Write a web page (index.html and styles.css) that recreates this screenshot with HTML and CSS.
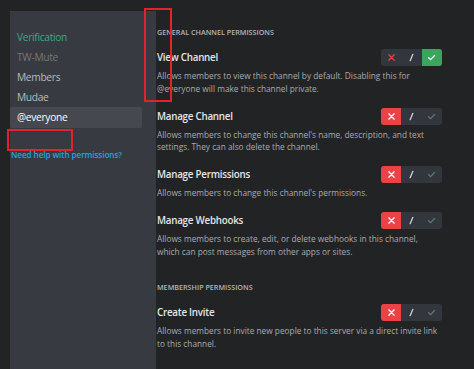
FILE: index.html
```html
<!DOCTYPE html>
<html>
<head>
  <title>Channel Permissions</title>
  <meta name="viewport" content="width=device-width, initial-scale=1.0">
  <link rel="stylesheet" href="styles.css">
</head>
<body>
  <div class="app">
    <aside class="sidebar">
      <ul class="roles">
        <li class="role role-green">Verification</li>
        <li class="role role-muted">TW-Mute</li>
        <li class="role">Members</li>
        <li class="role">Mudae</li>
        <li class="role role-active">@everyone</li>
      </ul>
      <a class="help-link" href="#">Need help with permissions?</a>
    </aside>

    <main class="content">
      <section class="perm-section">
        <h2 class="section-title">General Channel Permissions</h2>

        <div class="perm">
          <div class="perm-row">
            <span class="perm-name">View Channel</span>
            <div class="toggle">
              <span class="seg seg-deny"><svg viewBox="0 0 10 10"><path d="M2 2 8 8M8 2 2 8"/></svg></span>
              <span class="seg seg-neutral"><svg viewBox="0 0 10 10"><path d="M6.5 1.5 3.5 8.5"/></svg></span>
              <span class="seg seg-allow on"><svg viewBox="0 0 10 10"><path d="M1.8 5.2 4 7.4 8.4 2.8"/></svg></span>
            </div>
          </div>
          <p class="perm-desc">Allows members to view this channel by default. Disabling this for @everyone will make this channel private.</p>
        </div>

        <div class="perm">
          <div class="perm-row">
            <span class="perm-name">Manage Channel</span>
            <div class="toggle">
              <span class="seg seg-deny on"><svg viewBox="0 0 10 10"><path d="M2 2 8 8M8 2 2 8"/></svg></span>
              <span class="seg seg-neutral"><svg viewBox="0 0 10 10"><path d="M6.5 1.5 3.5 8.5"/></svg></span>
              <span class="seg seg-allow"><svg viewBox="0 0 10 10"><path d="M1.8 5.2 4 7.4 8.4 2.8"/></svg></span>
            </div>
          </div>
          <p class="perm-desc">Allows members to change this channel's name, description, and text settings. They can also delete the channel.</p>
        </div>

        <div class="perm">
          <div class="perm-row">
            <span class="perm-name">Manage Permissions</span>
            <div class="toggle">
              <span class="seg seg-deny on"><svg viewBox="0 0 10 10"><path d="M2 2 8 8M8 2 2 8"/></svg></span>
              <span class="seg seg-neutral"><svg viewBox="0 0 10 10"><path d="M6.5 1.5 3.5 8.5"/></svg></span>
              <span class="seg seg-allow"><svg viewBox="0 0 10 10"><path d="M1.8 5.2 4 7.4 8.4 2.8"/></svg></span>
            </div>
          </div>
          <p class="perm-desc">Allows members to change this channel's permissions.</p>
        </div>

        <div class="perm">
          <div class="perm-row">
            <span class="perm-name">Manage Webhooks</span>
            <div class="toggle">
              <span class="seg seg-deny on"><svg viewBox="0 0 10 10"><path d="M2 2 8 8M8 2 2 8"/></svg></span>
              <span class="seg seg-neutral"><svg viewBox="0 0 10 10"><path d="M6.5 1.5 3.5 8.5"/></svg></span>
              <span class="seg seg-allow"><svg viewBox="0 0 10 10"><path d="M1.8 5.2 4 7.4 8.4 2.8"/></svg></span>
            </div>
          </div>
          <p class="perm-desc">Allows members to create, edit, or delete webhooks in this channel, which can post messages from other apps or sites.</p>
        </div>
      </section>

      <section class="perm-section">
        <h2 class="section-title">Membership Permissions</h2>

        <div class="perm">
          <div class="perm-row">
            <span class="perm-name">Create Invite</span>
            <div class="toggle">
              <span class="seg seg-deny on"><svg viewBox="0 0 10 10"><path d="M2 2 8 8M8 2 2 8"/></svg></span>
              <span class="seg seg-neutral"><svg viewBox="0 0 10 10"><path d="M6.5 1.5 3.5 8.5"/></svg></span>
              <span class="seg seg-allow"><svg viewBox="0 0 10 10"><path d="M1.8 5.2 4 7.4 8.4 2.8"/></svg></span>
            </div>
          </div>
          <p class="perm-desc">Allows members to invite new people to this server via a direct invite link to this channel.</p>
        </div>
      </section>
    </main>

    <!-- red highlight boxes drawn over the screenshot -->
    <div class="mark mark-sidebar"></div>
    <div class="mark mark-edge"></div>
  </div>
</body>
</html>
```

FILE: styles.css
```css
:root {
  --bg: #222325;
  --panel: #373a41;
  --panel-active: #45484f;
  --text: #e4e5e7;
  --text-dim: #a9acb0;
  --deny: #ed4245;
  --allow: #3ba55d;
  --seg-off: #33363c;
  --mark: #e3232b;
}

* {
  margin: 0;
  padding: 0;
  box-sizing: border-box;
}

body {
  font-family: 'Open Sans', 'Noto Sans', sans-serif;
  background: var(--bg);
  color: var(--text);
  height: 100vh;
  overflow: hidden;
}

.app {
  position: relative;
  display: flex;
  height: 100%;
}

/* left role list */
.sidebar {
  width: 146px;
  margin: 11px 0 0 10px;
  padding-top: 16px;
  background: var(--panel);
  flex-shrink: 0;
}

.roles {
  list-style: none;
  width: 132px;
}

.role {
  height: 20px;
  line-height: 20px;
  padding-left: 7px;
  font-size: 10.2px;
  letter-spacing: -0.3px;
  color: #b9bbbe;
  border-radius: 2px;
}

.role-green {
  color: #3aa88a;
}

.role-muted {
  color: #74777c;
}

.role-active {
  height: 21px;
  line-height: 21px;
  background: var(--panel-active);
  color: #ffffff;
}

.help-link {
  display: block;
  margin-top: 21px;
  padding-left: 1px;
  font-size: 8.2px;
  font-weight: 600;
  letter-spacing: -0.1px;
  line-height: 12px;
  color: #1ea4e6;
  text-decoration: none;
}

/* permissions list */
.content {
  flex: 1;
  padding: 27px 32px 0 1px;
}

.perm-section + .perm-section {
  margin-top: 24px;
}

.section-title {
  font-size: 7.2px;
  font-weight: 600;
  line-height: 10px;
  text-transform: uppercase;
  color: #b3b5b9;
  margin-bottom: 12px;
}

.perm {
  margin-bottom: 12.5px;
}

.perm-row {
  display: flex;
  justify-content: space-between;
  align-items: center;
  height: 17px;
}

.perm-name {
  font-size: 9.8px;
  font-weight: 600;
  letter-spacing: -0.25px;
  color: var(--text);
}

.perm-desc {
  margin-top: 4px;
  font-size: 8.3px;
  line-height: 12.5px;
  color: var(--text-dim);
}

.toggle {
  display: flex;
  width: 61px;
  height: 17px;
  border-radius: 3px;
  overflow: hidden;
  background: var(--seg-off);
}

.seg {
  flex: 1;
  display: flex;
  align-items: center;
  justify-content: center;
}

.seg svg {
  width: 9px;
  height: 9px;
  fill: none;
  stroke-width: 1.4;
  stroke-linecap: round;
  stroke-linejoin: round;
}

.seg-deny svg {
  stroke: var(--deny);
}

.seg-neutral svg {
  stroke: #d4d6d9;
}

.seg-allow svg {
  stroke: #5b7d68;
}

.seg-deny.on {
  background: var(--deny);
}

.seg-allow.on {
  background: var(--allow);
}

.seg.on svg {
  stroke: #ffffff;
}

/* annotation boxes */
.mark {
  position: absolute;
  border: 2px solid var(--mark);
}

.mark-sidebar {
  left: 7px;
  top: 129px;
  width: 66px;
  height: 22px;
}

.mark-edge {
  left: 144px;
  top: 8px;
  width: 28px;
  height: 94px;
}
```
